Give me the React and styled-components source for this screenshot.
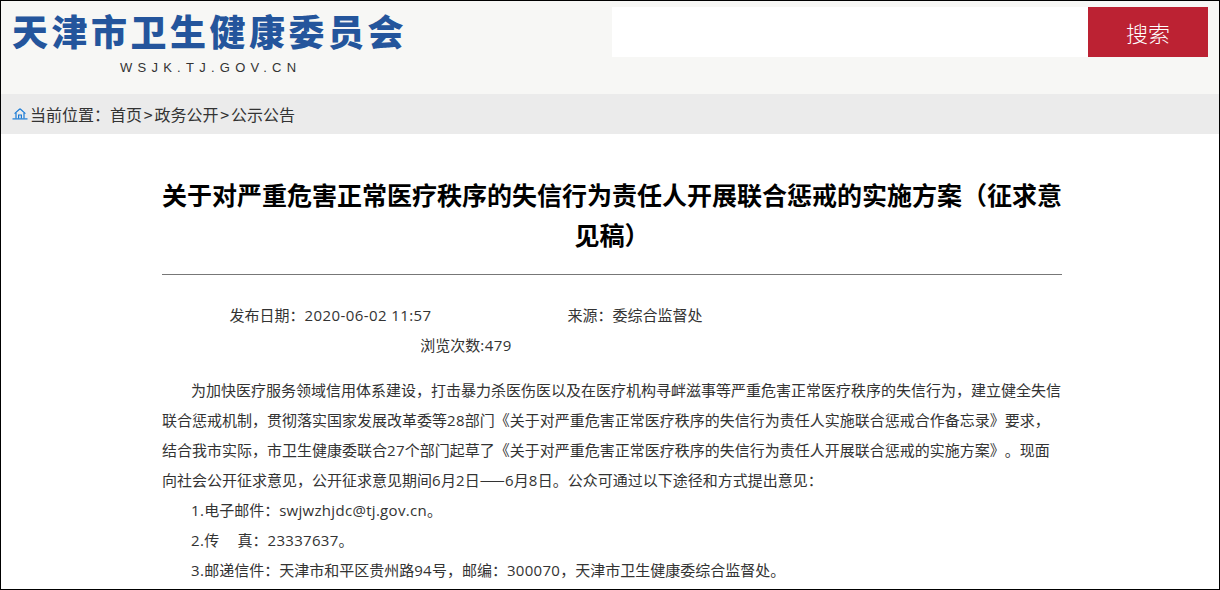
import styled, { createGlobalStyle } from 'styled-components';

const GlobalStyle = createGlobalStyle`
  html, body {
    margin: 0;
    padding: 0;
    background: #fff;
  }
`;

const cjk = `"Noto Sans CJK SC", "Noto Sans", sans-serif`;

const Frame = styled.div`
  box-sizing: border-box;
  width: 1220px;
  height: 590px;
  overflow: hidden;
  border: 1px solid #000;
  font-family: ${cjk};
  color: #333;
  text-spacing-trim: space-all;
`;

const Header = styled.header`
  box-sizing: border-box;
  display: flex;
  justify-content: space-between;
  align-items: flex-start;
  height: 93px;
  padding: 6px 11px 0 11px;
  background: #f7f7f5;
`;

const Logo = styled.div`
  display: flex;
  flex-direction: column;
  width: 400px;
  margin-top: -2px;
`;

const LogoName = styled.div`
  font-size: 36px;
  line-height: 50px;
  font-weight: 900;
  letter-spacing: 3.5px;
  color: #24559c;
  white-space: nowrap;
`;

const LogoUrl = styled.div`
  margin: 5px 0 0 108px;
  font-family: "Liberation Sans", sans-serif;
  font-size: 13px;
  line-height: 16px;
  letter-spacing: 5.25px;
  color: #333;
  white-space: nowrap;
`;

const SearchBox = styled.form`
  display: flex;
  height: 50px;
  margin: 0;
`;

const SearchInput = styled.div`
  width: 476px;
  background: #fff;
`;

const SearchButton = styled.div`
  display: flex;
  align-items: center;
  justify-content: center;
  width: 120px;
  background: #bc2233;
  color: #fff;
  font-size: 22px;
  font-weight: 300;
`;

const Crumbs = styled.nav`
  display: flex;
  align-items: center;
  gap: 2px;
  height: 40px;
  padding-left: 11px;
  background: #ebebeb;
  font-size: 16px;
  color: #333;
  white-space: nowrap;
`;

const CrumbSep = styled.span`
  display: inline-block;
  width: 12.5px;
  text-align: center;
`;

const Article = styled.main`
  width: 900px;
  margin-left: 161px;
  padding-top: 40px;
`;

const Title = styled.h1`
  margin: 0;
  padding-bottom: 20px;
  border-bottom: 1px solid #777;
  font-size: 25px;
  line-height: 40px;
  font-weight: 700;
  color: #000;
  text-align: center;
`;

const Meta = styled.div`
  display: flex;
  flex-wrap: wrap;
  justify-content: center;
  column-gap: 136px;
  margin-top: 25px;
  padding-right: 292px;
  font-size: 15px;
  line-height: 30px;
`;

const Body = styled.div`
  margin-top: 15px;
  font-size: 15px;
  line-height: 30px;
`;

const Para = styled.p`
  margin: 0;
  text-indent: 29px;
`;

// digits and latin run a little wider than the CJK font's own
const Latin = styled.span`
  font-family: "Open Sans", sans-serif;
  letter-spacing: ${(p) => (p.$wide ? '0.42px' : '0.3px')};
`;

const HomeIcon = () => (
  <svg width="16" height="12" viewBox="0 0 16 12" fill="none" stroke="#1a7bd6" strokeWidth="1.2">
    <path d="M8 .8 2.6 5.6M8 .8l5.4 4.8" />
    <path d="M4 5v5.5M12 5v5.5" />
    <path d="M6.6 10.5V7h2.8v3.5" />
    <path d="M.5 10.9h15" />
  </svg>
);

export default function App() {
  return (
    <Frame>
      <GlobalStyle />
      <Header>
        <Logo>
          <LogoName>天津市卫生健康委员会</LogoName>
          <LogoUrl>WSJK.TJ.GOV.CN</LogoUrl>
        </Logo>
        <SearchBox>
          <SearchInput />
          <SearchButton>搜索</SearchButton>
        </SearchBox>
      </Header>
      <Crumbs>
        <HomeIcon />
        <span>当前位置：首页<CrumbSep>&gt;</CrumbSep>政务公开<CrumbSep>&gt;</CrumbSep>公示公告</span>
      </Crumbs>
      <Article>
        <Title>关于对严重危害正常医疗秩序的失信行为责任人开展联合惩戒的实施方案（征求意见稿）</Title>
        <Meta>
          <span>发布日期：<Latin $wide>2020-06-02 11:57</Latin></span>
          <span>来源：委综合监督处</span>
          <span>浏览次数<Latin $wide>:479</Latin></span>
        </Meta>
        <Body>
          <Para>为加快医疗服务领域信用体系建设，打击暴力杀医伤医以及在医疗机构寻衅滋事等严重危害正常医疗秩序的失信行为，建立健全失信联合惩戒机制，贯彻落实国家发展改革委等<Latin>28</Latin>部门《关于对严重危害正常医疗秩序的失信行为责任人实施联合惩戒合作备忘录》要求，结合我市实际，市卫生健康委联合<Latin>27</Latin>个部门起草了《关于对严重危害正常医疗秩序的失信行为责任人开展联合惩戒的实施方案》。现面向社会公开征求意见，公开征求意见期间<Latin>6</Latin>月<Latin>2</Latin>日——<Latin>6</Latin>月<Latin>8</Latin>日。公众可通过以下途径和方式提出意见：</Para>
          <Para><Latin>1.</Latin>电子邮件：<Latin>swjwzhjdc@tj.gov.cn</Latin>。</Para>
          <Para><Latin>2.</Latin>传　&nbsp;真：<Latin>23337637</Latin>。</Para>
          <Para><Latin>3.</Latin>邮递信件：天津市和平区贵州路<Latin>94</Latin>号，邮编：<Latin>300070</Latin>，天津市卫生健康委综合监督处。</Para>
        </Body>
      </Article>
    </Frame>
  );
}
